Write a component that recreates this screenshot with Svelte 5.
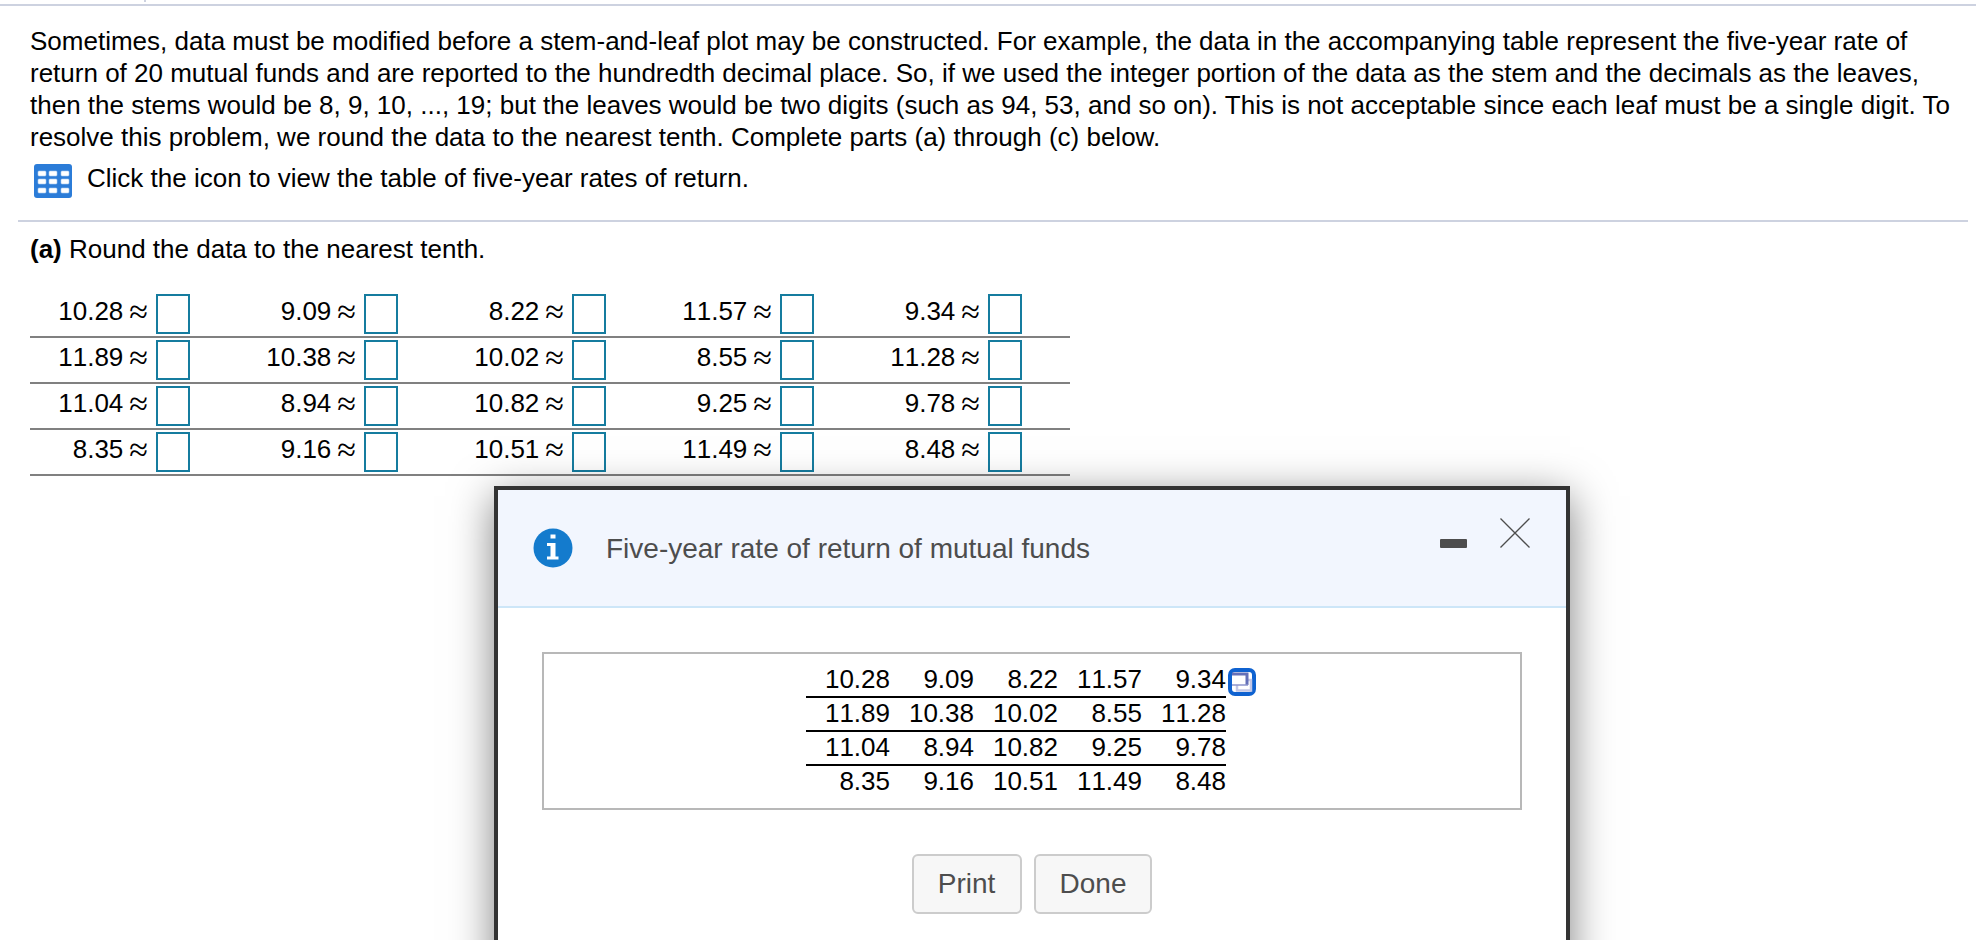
<script>
  const rates = [
    ['10.28', '9.09', '8.22', '11.57', '9.34'],
    ['11.89', '10.38', '10.02', '8.55', '11.28'],
    ['11.04', '8.94', '10.82', '9.25', '9.78'],
    ['8.35', '9.16', '10.51', '11.49', '8.48']
  ];

  let answers = $state(rates.map((row) => row.map(() => '')));
</script>

<div class="page">
  <div class="top-bar"><div class="tab"></div></div>

  <section class="intro">
    <p>
      Sometimes, data must be modified before a stem-and-leaf plot may be constructed. For example, the data in the accompanying table represent the five-year rate of return of 20 mutual funds and are reported to the hundredth decimal place. So, if we used the integer portion of the data as the stem and the decimals as the leaves, then the stems would be 8, 9, 10, ..., 19; but the leaves would be two digits (such as 94, 53, and so on). This is not acceptable since each leaf must be a single digit. To resolve this problem, we round the data to the nearest tenth. Complete parts (a) through (c) below.
    </p>
    <div class="table-link">
      <button class="icon-button grid-icon" aria-label="View the table">
        <svg width="38" height="34" viewBox="0 0 38 34">
          <rect width="38" height="34" rx="3" fill="#2b7cd8" />
          {#each [7, 15, 24] as y}
            {#each [4, 15, 27] as x}
              <rect {x} {y} width="8" height="5" rx="1" fill="#fff" stroke="#a9cbf0" stroke-width="0.600" />
            {/each}
          {/each}
        </svg>
      </button>
      <span>Click the icon to view the table of five-year rates of return.</span>
    </div>
  </section>

  <section class="question">
    <p><strong>(a)</strong> Round the data to the nearest tenth.</p>
    <table class="answers">
      <tbody>
        {#each rates as row, r}
          <tr>
            {#each row as rate, c}
              <td>
                <div class="answer">
                  <label for="answer-{r}-{c}">{rate} <span class="approx">≈</span></label>
                  <input id="answer-{r}-{c}" type="text" bind:value={answers[r][c]} />
                </div>
              </td>
            {/each}
          </tr>
        {/each}
      </tbody>
    </table>
  </section>

  <div class="dialog" role="dialog" aria-labelledby="dialog-title">
    <header>
      <svg class="info" width="40" height="40" viewBox="0 0 40 40">
        <circle cx="20" cy="20" r="19.500" fill="#147bcd" />
        <path d="M17.500 6.500h5v4h-5zM14 15h8.500v13.500h3v3h-11.500v-3h3.500V18h-3.500z" fill="#fff" />
      </svg>
      <h2 id="dialog-title">Five-year rate of return of mutual funds</h2>
      <div class="window-buttons">
        <button class="icon-button" aria-label="Minimize">
          <svg width="28" height="30" viewBox="0 0 28 30">
            <rect y="21" width="27" height="9" rx="1" fill="#4d4d4d" />
          </svg>
        </button>
        <button class="icon-button" aria-label="Close">
          <svg width="30" height="30" viewBox="0 0 30 30">
            <path d="M0.500 0.500l29 29M29.500 0.500l-29 29" stroke="#4d4d4d" stroke-width="1.300" />
          </svg>
        </button>
      </div>
    </header>

    <div class="dialog-body">
      <div class="frame">
        <div class="data">
          <table>
            <tbody>
              {#each rates as row}
                <tr>
                  {#each row as rate}
                    <td>{rate}</td>
                  {/each}
                </tr>
              {/each}
            </tbody>
          </table>
          <button class="icon-button copy" aria-label="Copy data">
            <svg width="28" height="28" viewBox="0 0 28 28">
              <rect x="2" y="2" width="24" height="24" rx="5" fill="#fff" stroke="#0f62d0" stroke-width="4" />
              <path d="M9 17v5.500h14V12h-3" fill="none" stroke="#c3c7e6" stroke-width="2.500" />
              <path d="M4 6h15v11" fill="none" stroke="#6470b8" stroke-width="3" />
              <path d="M4 17h16" fill="none" stroke="#8d95cc" stroke-width="1.500" />
            </svg>
          </button>
        </div>
      </div>
      <div class="actions">
        <button>Print</button>
        <button>Done</button>
      </div>
    </div>
  </div>
</div>

<style>
  :global(body) {
    margin: 0;
    background: #fff;
  }

  .page {
    position: relative;
    height: 100vh;
    overflow: hidden;
    font-family: "Liberation Sans", Arial, sans-serif;
    font-size: 26px;
    line-height: 32px;
    color: #000;
  }

  p,
  h2 {
    margin: 0;
  }

  button,
  input {
    font: inherit;
    color: inherit;
    box-sizing: border-box;
  }

  table {
    border-collapse: collapse;
    font-kerning: none;
  }

  svg {
    display: block;
  }

  .top-bar {
    height: 4px;
    border-bottom: 2px solid #cdd2e0;
  }

  .tab {
    width: 144px;
    height: 2px;
    border-right: 2px solid #cdd2e0;
  }

  .icon-button {
    border: none;
    padding: 0;
    background: none;
    cursor: pointer;
  }

  .intro {
    margin: 0 8px 0 18px;
    padding: 19px 12px 22px;
    border-bottom: 2px solid #cdd2e0;
  }

  .table-link {
    display: flex;
    align-items: flex-start;
    gap: 15px;
    padding: 9px 4px 0;
  }

  .grid-icon {
    margin-top: 2px;
  }

  .question {
    padding: 11px 30px;
  }

  .answers {
    margin-top: 27px;
  }

  .answers td {
    width: 208px;
    padding: 2px 0;
    border-bottom: 2px solid #808080;
  }

  .answer {
    display: flex;
  }

  .answer label {
    display: flex;
    justify-content: flex-end;
    align-items: flex-start;
    gap: 6px;
    width: 118px;
    padding-top: 1px;
  }

  .approx {
    font-family: "Liberation Serif", serif;
    font-size: 34px;
    line-height: 34px;
  }

  .answer input {
    width: 34px;
    height: 40px;
    margin-left: 8px;
    padding: 0 4px;
    border: 2px solid #157c9f;
    background: #fff;
  }

  .dialog {
    position: absolute;
    top: 486px;
    left: 25%;
    width: 1068px;
    height: 520px;
    border: 4px solid #333;
    background: #fff;
    box-shadow: 0 10px 40px rgba(0, 0, 0, 0.5);
  }

  header {
    display: flex;
    align-items: center;
    height: 116px;
    padding: 0 36px 0 35px;
    border-bottom: 2px solid #cde6f8;
    background: #f2f6fe;
  }

  h2 {
    flex: 1;
    margin-left: 33px;
    padding-top: 2px;
    font-size: 28px;
    font-weight: normal;
    color: #4d4d4d;
  }

  .window-buttons {
    display: flex;
    align-self: flex-start;
    gap: 32px;
    margin-top: 28px;
  }

  .dialog-body {
    padding: 44px;
  }

  .frame {
    display: flex;
    justify-content: center;
    padding: 10px 0;
    border: 2px solid #b8b8b8;
  }

  .data {
    display: flex;
    align-items: flex-start;
    gap: 2px;
    padding-right: 2px;
  }

  .data td {
    width: 84px;
    height: 32px;
    padding: 0;
    line-height: 30px;
    text-align: right;
    vertical-align: top;
  }

  .data tr:not(:last-child) td {
    border-bottom: 2px solid #000;
  }

  .copy {
    margin-top: 4px;
  }

  .actions {
    display: flex;
    justify-content: center;
    gap: 12px;
    margin-top: 44px;
  }

  .actions button {
    min-width: 110px;
    height: 60px;
    padding: 0 24px;
    border: 2px solid #ccc;
    border-radius: 6px;
    background: #f7f7f7;
    font-size: 28px;
    color: #4d4d4d;
  }
</style>
